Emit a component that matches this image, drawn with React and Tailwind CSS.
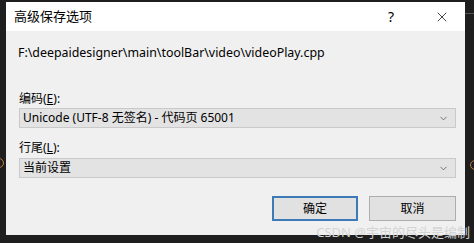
import { X, ChevronDown } from 'lucide-react'

const font = { fontFamily: '"Noto Sans", "Noto Sans CJK SC", sans-serif' }

function Select({ value }) {
    return (
        <div className="flex h-[20px] w-[437px] items-center justify-between border border-[#c9c9c9] bg-[#e3e3e3] pl-[3px] pr-[6px] text-[12px] leading-none text-black">
            <span>{value}</span>
            <ChevronDown size={11} strokeWidth={1.5} className="text-[#444]" />
        </div>
    )
}

function App() {
    return (
        <div className="relative flex h-[243px] w-[474px] overflow-hidden bg-[#1e1e1e] pl-[6px] pt-[2px]" style={font}>
            {/* dialog */}
            <div className="flex h-[233px] w-[459px] flex-col bg-[#f0f0f0]">

                {/* title bar */}
                <div className="flex h-[29px] items-center bg-white pl-[8px]">
                    <span className="flex-1 text-[13px] text-black">高级保存选项</span>
                    <span className="mr-[5px] flex w-[46px] justify-center text-[14px] text-black">?</span>
                    <span className="flex w-[46px] justify-center text-black">
                        <X size={16} strokeWidth={1.1} />
                    </span>
                </div>

                {/* body */}
                <div className="flex flex-col pl-[13px] pt-[14px]">
                    <div className="-ml-[1px] h-[16px] text-[12.4px] leading-[16px] text-black">F:\deepaidesigner\main\toolBar\video\videoPlay.cpp</div>

                    <div className="mt-[30px] h-[16px] text-[12px] leading-[16px] text-black">编码(<span className="underline">E</span>):</div>
                    <div className="mt-[1px]"><Select value="Unicode (UTF-8 无签名) - 代码页 65001" /></div>

                    <div className="mt-[12px] h-[16px] text-[12px] leading-[16px] text-black">行尾(<span className="underline">L</span>):</div>
                    <div className="mt-[2px]"><Select value="当前设置" /></div>

                    <div className="mt-[18px] flex w-[437px] justify-end gap-[11px]">
                        <button className="h-[25px] w-[86px] border-2 border-[#3d7ab8] bg-[#e1e1e1] text-[12px] text-black">确定</button>
                        <button className="h-[25px] w-[87px] border border-[#adadad] bg-[#e1e1e1] text-[12px] text-black">取消</button>
                    </div>
                </div>
            </div>

            {/* background bits */}
            <div className="absolute left-[-6px] top-[158px] h-[10px] w-[10px] rounded-full border border-[#c07a3a]"></div>
            <div className="absolute right-[-6px] top-[160px] h-[10px] w-[10px] rounded-full border border-[#c07a3a]"></div>
            <div className="absolute right-0 top-[13px] h-[1px] w-[9px] bg-[#555]"></div>

            {/* watermark */}
            <div className="absolute bottom-[4px] right-[4px] text-[13px] leading-none text-[#d4d4d4]">CSDN @宇宙的尽头是编制</div>
        </div>
    )
}

export default App
